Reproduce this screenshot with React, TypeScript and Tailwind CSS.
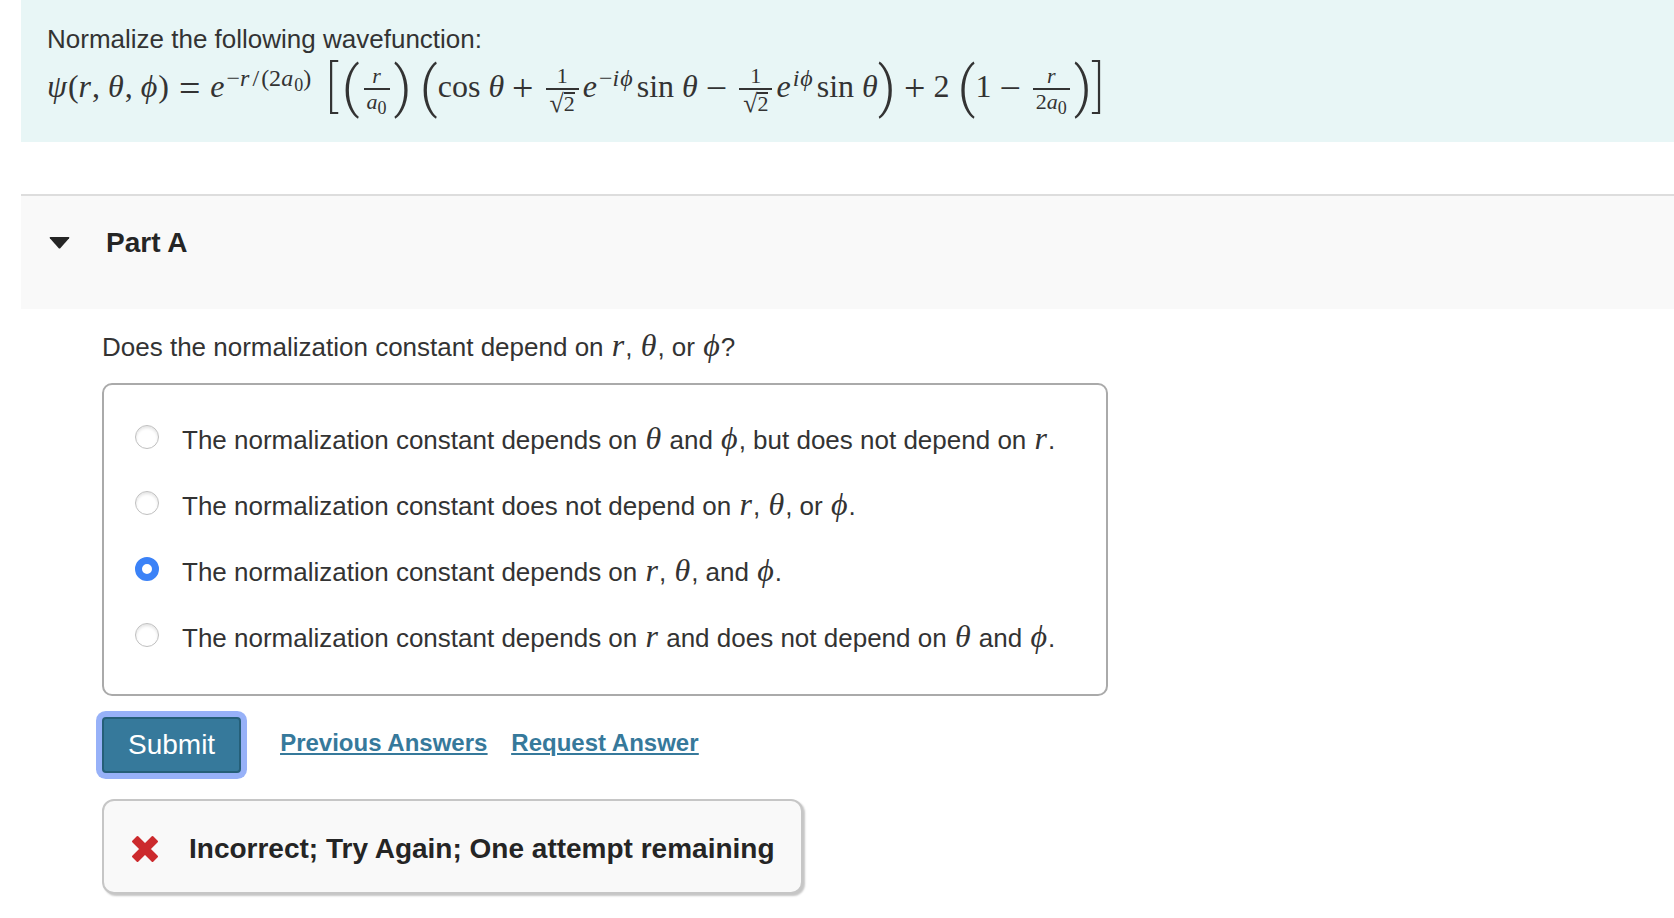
import React, { useState } from "react";

interface ChildrenProps {
  children: React.ReactNode;
}

// Inline math symbol inside running text
const Sym: React.FC<ChildrenProps> = ({ children }) => (
  <i className="mx-px font-['Liberation_Serif','DejaVu_Serif',serif] text-[32px] leading-[0px]">
    {children}
  </i>
);

const Var: React.FC<ChildrenProps> = ({ children }) => <i className="mr-px">{children}</i>;

const Delim: React.FC<ChildrenProps> = ({ children }) => (
  <span className="pt-0.5 font-['Roboto',sans-serif] text-[56px] leading-[56px] font-light">
    {children}
  </span>
);

const Bracket: React.FC<ChildrenProps> = ({ children }) => (
  <span className="pt-0.5 font-['Roboto',sans-serif] text-[56px] leading-[56px] font-extralight">
    {children}
  </span>
);

const Sup: React.FC<ChildrenProps> = ({ children }) => (
  <span className="mr-1 ml-0.5 pb-4 text-[24px] leading-6 whitespace-nowrap">{children}</span>
);

const Sub: React.FC<ChildrenProps> = ({ children }) => (
  <sub className="text-[18px] leading-none">{children}</sub>
);

const Op: React.FC<ChildrenProps> = ({ children }) => (
  <span className="mx-2 pt-1 text-[38px]">{children}</span>
);

interface FracProps {
  top: React.ReactNode;
  bottom: React.ReactNode;
}

const Frac: React.FC<FracProps> = ({ top, bottom }) => (
  <span className="mx-1 flex flex-col pt-1 text-center text-[22px]">
    <span className="h-6 leading-6">{top}</span>
    <span className="h-6 border-t-2 border-[#333] px-[3px] leading-6">{bottom}</span>
  </span>
);

const RootTwo = () => (
  <span className="flex px-px pt-0.5">
    <span className="text-[26px]">√</span>
    <span className="h-5 border-t-2 border-[#333] leading-5">2</span>
  </span>
);

const Wavefunction = () => (
  <div className="flex h-[62px] items-center font-['Liberation_Serif','DejaVu_Serif',serif] text-[32px] leading-9 whitespace-nowrap">
    <span>
      <Var>ψ</Var>(<Var>r</Var>, <Var>θ</Var>, <Var>ϕ</Var>)
    </span>
    <span className="mx-0.5 flex">
      <Op>=</Op>
    </span>
    <i>e</i>
    <Sup>
      −<Var>r</Var>
      <span className="mx-0.5">/</span>(2<Var>a</Var>
      <Sub>0</Sub>)
    </Sup>
    <span className="ml-2.5 flex gap-1">
      <Bracket>[</Bracket>
      <Delim>(</Delim>
    </span>
    <Frac
      top={<i>r</i>}
      bottom={
        <>
          <i>a</i>
          <Sub>0</Sub>
        </>
      }
    />
    <Delim>)</Delim>
    <span className="ml-2 flex">
      <Delim>(</Delim>
    </span>
    <span>
      cos <i>θ</i>
    </span>
    <Op>+</Op>
    <Frac top="1" bottom={<RootTwo />} />
    <i>e</i>
    <Sup>
      −<Var>i</Var>
      <i>ϕ</i>
    </Sup>
    <span>
      sin <i>θ</i>
    </span>
    <Op>−</Op>
    <Frac top="1" bottom={<RootTwo />} />
    <i>e</i>
    <Sup>
      <Var>i</Var>
      <i>ϕ</i>
    </Sup>
    <span>
      sin <i>θ</i>
    </span>
    <Delim>)</Delim>
    <Op>+</Op>
    <span>2</span>
    <span className="ml-2 flex">
      <Delim>(</Delim>
    </span>
    <span>1</span>
    <Op>−</Op>
    <Frac
      top={<i>r</i>}
      bottom={
        <>
          2<i>a</i>
          <Sub>0</Sub>
        </>
      }
    />
    <Delim>)</Delim>
    <Bracket>]</Bracket>
  </div>
);

const options = [
  {
    id: "theta-phi",
    label: (
      <>
        The normalization constant depends on <Sym>θ</Sym> and <Sym>ϕ</Sym>, but does not
        depend on <Sym>r</Sym>.
      </>
    ),
  },
  {
    id: "none",
    label: (
      <>
        The normalization constant does not depend on <Sym>r</Sym>, <Sym>θ</Sym>, or{" "}
        <Sym>ϕ</Sym>.
      </>
    ),
  },
  {
    id: "all",
    label: (
      <>
        The normalization constant depends on <Sym>r</Sym>, <Sym>θ</Sym>, and <Sym>ϕ</Sym>.
      </>
    ),
  },
  {
    id: "r-only",
    label: (
      <>
        The normalization constant depends on <Sym>r</Sym> and does not depend on{" "}
        <Sym>θ</Sym> and <Sym>ϕ</Sym>.
      </>
    ),
  },
];

const App: React.FC = () => {
  const [answer, setAnswer] = useState("all");
  const [open, setOpen] = useState(true);

  return (
    <main className="min-h-screen bg-white pl-[21px] font-['Liberation_Sans',Arial,sans-serif] text-[26px] leading-8 text-[#333]">
      <section className="bg-[#e8f6f6] px-[26px] pt-[23px] pb-[25px]">
        <p>Normalize the following wavefunction:</p>
        <Wavefunction />
      </section>

      <section className="mt-[52px]">
        <h2 className="h-[115px] border-t-2 border-[#ddd] bg-[#f9f9f9] pt-[31px] pl-7 text-[28px] font-bold text-[#252525]">
          <button
            type="button"
            aria-expanded={open}
            onClick={() => setOpen(!open)}
            className="flex items-center gap-9"
          >
            <svg className="h-3 w-[21px]" viewBox="0 0 20 12" fill="currentColor" aria-hidden="true">
              <path d="M1 0h18q1.500 0 .6 1.200L11 11q-1 1-2 0L.4 1.200Q-.5 0 1 0z" />
            </svg>
            Part A
          </button>
        </h2>

        {open && (
          <form className="pt-[22px] pl-[81px]" onSubmit={(e) => e.preventDefault()}>
            <fieldset>
              <legend>
                Does the normalization constant depend on <Sym>r</Sym>, <Sym>θ</Sym>, or{" "}
                <Sym>ϕ</Sym>?
              </legend>
              <div className="mt-5 flex max-w-[1006px] flex-col gap-[34px] rounded-[10px] border-2 border-[#aaa] px-[31px] pt-[39px] pb-10">
                {options.map((option) => (
                  <label key={option.id} className="flex h-8 items-start gap-[23px]">
                    <input
                      type="radio"
                      name="answer"
                      value={option.id}
                      checked={answer === option.id}
                      onChange={() => setAnswer(option.id)}
                      className="mt-px size-6 shrink-0 appearance-none rounded-full border border-[#c0c0c0] bg-white shadow-[inset_0_2px_3px_#e4e4e4] checked:border-[7px] checked:border-[#3b82f7] checked:shadow-none"
                    />
                    <span>{option.label}</span>
                  </label>
                ))}
              </div>
            </fieldset>

            <div className="mt-[21px] flex items-center">
              <button
                type="submit"
                className="h-14 rounded-[4px] border-2 border-[#255f78] bg-[#36799b] px-6 text-[28px] text-white ring-6 ring-[#97b1f8]"
              >
                Submit
              </button>
              <div className="ml-[39px] flex gap-6 pb-1 text-[24px] font-bold text-[#36799b] underline decoration-2 underline-offset-2">
                <a href="#previous">Previous Answers</a>
                <a href="#request">Request Answer</a>
              </div>
            </div>

            <div
              role="alert"
              className="mt-[26px] flex h-[95px] w-fit items-center gap-[30px] rounded-[12px] border-2 border-[#c6c6c6] bg-[#f9f9f9] pt-1 pr-[26px] pl-[27px] text-[28px] font-bold text-[#252525] shadow-[2px_2px_2px_#c6c6c6]"
            >
              <svg className="size-7" viewBox="0 0 28 28" aria-hidden="true">
                <path
                  d="M6.500 2l7.500 7.500L21.500 2l4.500 4.500-7.500 7.500 7.500 7.500-4.500 4.500-7.500-7.500L6.500 26 2 21.500 9.500 14 2 6.500z"
                  fill="#cc2a2d"
                  stroke="#cc2a2d"
                  strokeWidth="2"
                  strokeLinejoin="round"
                />
              </svg>
              Incorrect; Try Again; One attempt remaining
            </div>
          </form>
        )}
      </section>
    </main>
  );
};

export default App;
